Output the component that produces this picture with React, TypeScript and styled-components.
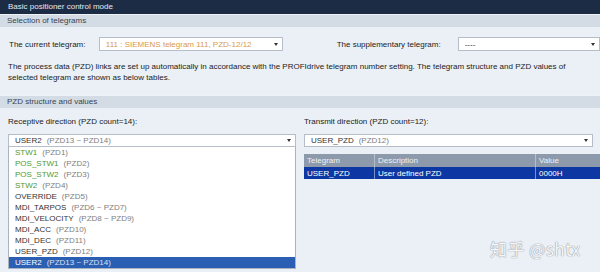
import React from 'react'
import styled, { createGlobalStyle } from 'styled-components'

const GlobalStyle = createGlobalStyle`
  html, body {
    margin: 0;
    padding: 0;
  }
  body {
    width: 600px;
    height: 272px;
    overflow: hidden;
    background: #ebf0f6;
    font-family: 'Liberation Sans', Arial, sans-serif;
    font-size: 8px;
    color: #222;
  }
`

const Page = styled.div`
  position: relative;
  width: 600px;
  height: 272px;
  background: #ebf0f6;
  overflow: hidden;
`

const TitleBar = styled.div`
  height: 14px;
  line-height: 14px;
  padding-left: 8px;
  background: #1d2c45;
  color: #e2e8f0;
`

const SectionHeader = styled.div`
  height: 12px;
  line-height: 12px;
  padding-left: 7px;
  background: #d3dbe4;
  color: #3b4450;
  border-top: 1px solid #eef2f7;
`

const TelegramRow = styled.div`
  display: flex;
  align-items: center;
  margin-top: 10px;
  padding-left: 9px;
`

const FieldLabel = styled.span<{ $width?: number; $gapLeft?: number }>`
  width: ${(p) => (p.$width ? `${p.$width}px` : 'auto')};
  margin-left: ${(p) => p.$gapLeft ?? 0}px;
  margin-right: ${(p) => (p.$width ? 0 : 17)}px;
  color: #222;
  white-space: nowrap;
`

const SelectBox = styled.div<{ $width?: number }>`
  display: flex;
  align-items: center;
  box-sizing: border-box;
  width: ${(p) => (p.$width ? `${p.$width}px` : '100%')};
  height: ${(p) => (p.$width ? 14 : 13)}px;
  padding: 0 4px 0 6px;
  background: #fff;
  border: 1px solid #b5bdc9;
  white-space: nowrap;
`

const SelectText = styled.span<{ $tone?: 'orange' | 'dark' }>`
  color: ${(p) => (p.$tone === 'orange' ? '#d99a4a' : '#333')};
  flex: 1;
`

const Muted = styled.span<{ $light?: boolean }>`
  color: ${(p) => (p.$light ? '#d6e0f2' : '#808080')};
  margin-left: 5px;
`

const Caret = styled.span`
  width: 0;
  height: 0;
  border-left: 2px solid transparent;
  border-right: 2px solid transparent;
  border-top: 3px solid #333;
`

const Paragraph = styled.p`
  margin: 10px 0 12px 8px;
  line-height: 11px;
  white-space: nowrap;
  color: #222;
`

const PzdGrid = styled.div`
  display: grid;
  grid-template-columns: 288px 289px;
  column-gap: 8px;
  padding: 8px 7px 0 8px;
`

const Column = styled.div`
  display: flex;
  flex-direction: column;
`

const ColumnLabel = styled.div`
  height: 12px;
  line-height: 12px;
  margin-bottom: 6px;
  color: #222;
`

const SelectWrap = styled.div`
  position: relative;
`

const Menu = styled.ul`
  position: absolute;
  top: 100%;
  left: 0;
  right: 0;
  margin: 0;
  padding: 0;
  list-style: none;
  background: #fff;
  border: 1px solid #aab4c1;
  border-top: none;
`

const MenuItem = styled.li<{ $selected?: boolean; $green?: boolean }>`
  height: 11px;
  line-height: 11px;
  padding-left: 6px;
  background: ${(p) => (p.$selected ? '#2b5fb4' : 'transparent')};
  color: ${(p) => (p.$selected ? '#fff' : p.$green ? '#4d9a34' : '#333')};
  white-space: nowrap;
`

const Table = styled.table`
  margin-top: 7px;
  width: 288px;
  border-collapse: collapse;
  table-layout: fixed;
  font-size: 8px;
`

const HeadCell = styled.th<{ $width: number }>`
  width: ${(p) => p.$width}px;
  height: 13px;
  padding: 0 0 0 3px;
  background: #8d9aab;
  color: #eef1f5;
  font-weight: normal;
  text-align: left;
  border-left: 1px solid #b3bfcc;
  &:first-child {
    border-left: none;
  }
`

const BodyCell = styled.td`
  height: 12px;
  padding: 0 0 0 3px;
  background: #0d37a2;
  color: #fff;
  border-left: 1px solid #7b92c6;
  &:first-child {
    border-left: none;
  }
`

const Watermark = styled.div`
  position: absolute;
  left: 490px;
  top: 236px;
  font-family: 'Noto Sans CJK SC', 'Liberation Sans', sans-serif;
  font-size: 17px;
  color: #f6f8fb;
  text-shadow: 0 0 1px #8a8f96, 0 0 1px #8a8f96;
  letter-spacing: 0.5px;
  white-space: nowrap;
`

const items = [
  { name: 'STW1', pzd: '(PZD1)', green: true },
  { name: 'POS_STW1', pzd: '(PZD2)', green: true },
  { name: 'POS_STW2', pzd: '(PZD3)', green: true },
  { name: 'STW2', pzd: '(PZD4)', green: true },
  { name: 'OVERRIDE', pzd: '(PZD5)' },
  { name: 'MDI_TARPOS', pzd: '(PZD6 ~ PZD7)' },
  { name: 'MDI_VELOCITY', pzd: '(PZD8 ~ PZD9)' },
  { name: 'MDI_ACC', pzd: '(PZD10)' },
  { name: 'MDI_DEC', pzd: '(PZD11)' },
  { name: 'USER_PZD', pzd: '(PZD12)' },
  { name: 'USER2', pzd: '(PZD13 ~ PZD14)', selected: true },
]

export default function App() {
  return (
    <Page>
      <GlobalStyle />
      <TitleBar>Basic positioner control mode</TitleBar>
      <SectionHeader>Selection of telegrams</SectionHeader>

      <TelegramRow>
        <FieldLabel $width={91}>The current telegram:</FieldLabel>
        <SelectBox $width={186}>
          <SelectText $tone='orange'>111 : SIEMENS telegram 111, PZD-12/12</SelectText>
          <Caret />
        </SelectBox>
        <FieldLabel $gapLeft={54}>The supplementary telegram:</FieldLabel>
        <SelectBox $width={144}>
          <SelectText>----</SelectText>
          <Caret />
        </SelectBox>
      </TelegramRow>

      <Paragraph>
        The process data (PZD) links are set up automatically in accordance with the PROFIdrive
        telegram number setting. The telegram structure and PZD values of
        <br />
        selected telegram are shown as below tables.
      </Paragraph>

      <SectionHeader>PZD structure and values</SectionHeader>

      <PzdGrid>
        <Column>
          <ColumnLabel>Receptive direction (PZD count=14):</ColumnLabel>
          <SelectWrap>
            <SelectBox>
              <SelectText>
                USER2<Muted>(PZD13 ~ PZD14)</Muted>
              </SelectText>
              <Caret />
            </SelectBox>
            <Menu>
              {items.map((it) => (
                <MenuItem key={it.name} $selected={it.selected} $green={it.green}>
                  {it.name}
                  <Muted $light={it.selected}>{it.pzd}</Muted>
                </MenuItem>
              ))}
            </Menu>
          </SelectWrap>
        </Column>

        <Column>
          <ColumnLabel>Transmit direction (PZD count=12):</ColumnLabel>
          <SelectBox>
            <SelectText>
              USER_PZD<Muted>(PZD12)</Muted>
            </SelectText>
            <Caret />
          </SelectBox>
          <Table>
            <thead>
              <tr>
                <HeadCell $width={67}>Telegram</HeadCell>
                <HeadCell $width={157}>Description</HeadCell>
                <HeadCell $width={64}>Value</HeadCell>
              </tr>
            </thead>
            <tbody>
              <tr>
                <BodyCell>USER_PZD</BodyCell>
                <BodyCell>User defined PZD</BodyCell>
                <BodyCell>0000H</BodyCell>
              </tr>
            </tbody>
          </Table>
        </Column>
      </PzdGrid>

      <Watermark>知乎 @shtx</Watermark>
    </Page>
  )
}
